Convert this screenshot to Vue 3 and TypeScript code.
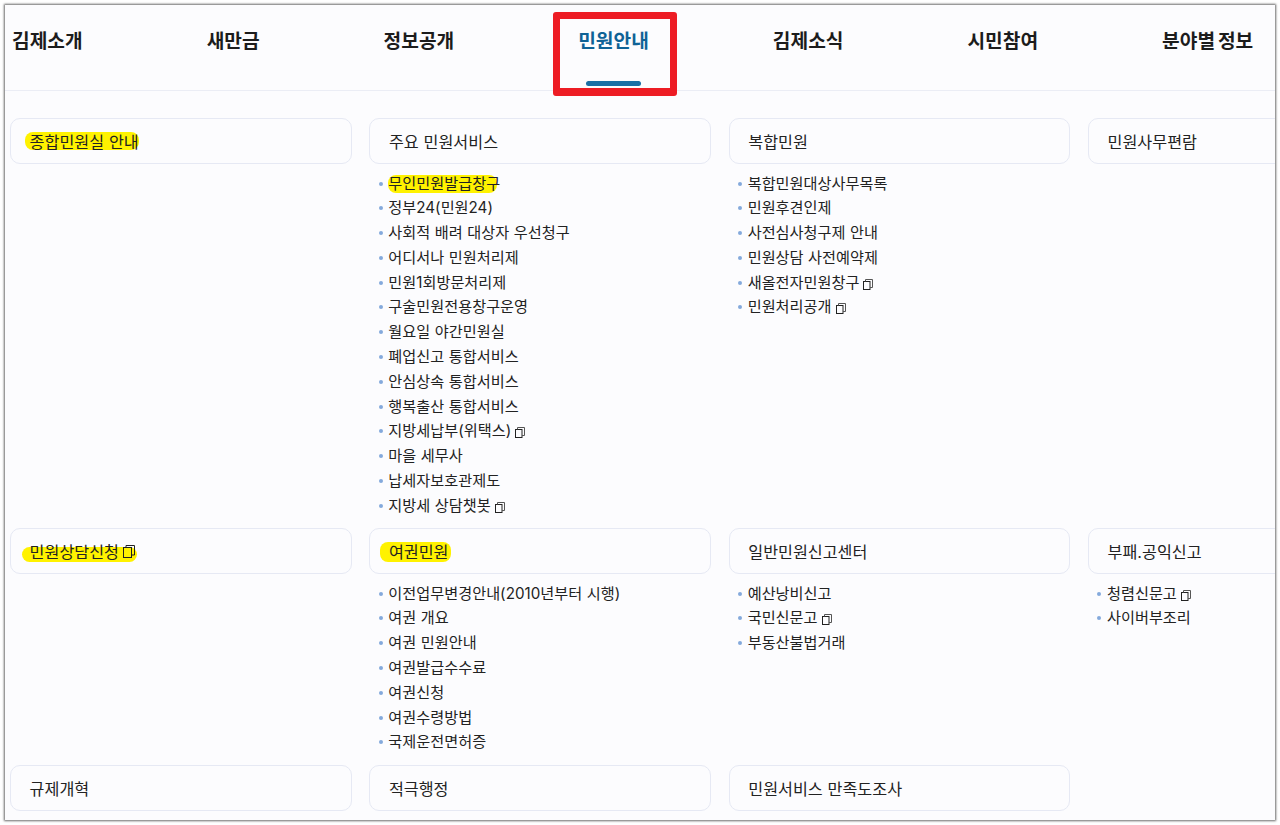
<script setup lang="ts">
interface Item { text: string; copy?: boolean; mark?: boolean }
interface Section { title: string; copy?: boolean; mark?: string; items: Item[] }

const nav: string[] = ['김제소개', '새만금', '정보공개', '민원안내', '김제소식', '시민참여', '분야별 정보']

const sections: Section[] = [
  { title: '종합민원실 안내', mark: 'mark-a', items: [] },
  {
    title: '주요 민원서비스',
    items: [
      { text: '무인민원발급창구', mark: true },
      { text: '정부24(민원24)' },
      { text: '사회적 배려 대상자 우선청구' },
      { text: '어디서나 민원처리제' },
      { text: '민원1회방문처리제' },
      { text: '구술민원전용창구운영' },
      { text: '월요일 야간민원실' },
      { text: '폐업신고 통합서비스' },
      { text: '안심상속 통합서비스' },
      { text: '행복출산 통합서비스' },
      { text: '지방세납부(위택스)', copy: true },
      { text: '마을 세무사' },
      { text: '납세자보호관제도' },
      { text: '지방세 상담챗봇', copy: true },
    ],
  },
  {
    title: '복합민원',
    items: [
      { text: '복합민원대상사무목록' },
      { text: '민원후견인제' },
      { text: '사전심사청구제 안내' },
      { text: '민원상담 사전예약제' },
      { text: '새올전자민원창구', copy: true },
      { text: '민원처리공개', copy: true },
    ],
  },
  { title: '민원사무편람', items: [] },
  { title: '민원상담신청', copy: true, mark: 'mark-b', items: [] },
  {
    title: '여권민원',
    mark: 'mark-c',
    items: [
      { text: '이전업무변경안내(2010년부터 시행)' },
      { text: '여권 개요' },
      { text: '여권 민원안내' },
      { text: '여권발급수수료' },
      { text: '여권신청' },
      { text: '여권수령방법' },
      { text: '국제운전면허증' },
    ],
  },
  {
    title: '일반민원신고센터',
    items: [
      { text: '예산낭비신고' },
      { text: '국민신문고', copy: true },
      { text: '부동산불법거래' },
    ],
  },
  {
    title: '부패.공익신고',
    items: [
      { text: '청렴신문고', copy: true },
      { text: '사이버부조리' },
    ],
  },
  { title: '규제개혁', items: [] },
  { title: '적극행정', items: [] },
  { title: '민원서비스 만족도조사', items: [] },
]
</script>

<template>
  <div class="frame">
    <nav class="topnav">
      <a v-for="name in nav" :key="name" class="nav-item" :class="{ active: name === '민원안내' }">
        {{ name }}
      </a>
    </nav>

    <div class="grid">
      <section v-for="s in sections" :key="s.title" class="col">
        <div class="card">
          <span class="label" :class="s.mark">
            {{ s.title }}
            <svg v-if="s.copy" class="copy" viewBox="0 0 12 13" width="12" height="13">
              <rect x="0.5" y="2.5" width="8" height="10" fill="none" stroke="currentColor" />
              <path d="M3 2.5V0.5H11.5V10H8.5" fill="none" stroke="currentColor" />
            </svg>
          </span>
        </div>
        <ul v-if="s.items.length" class="list">
          <li v-for="it in s.items" :key="it.text">
            <span class="label" :class="{ 'mark-d': it.mark }">{{ it.text }}</span>
            <svg v-if="it.copy" class="copy small" viewBox="0 0 10 11" width="10" height="11">
              <rect x="0.5" y="2.5" width="6.5" height="8" fill="none" stroke="currentColor" />
              <path d="M2.5 2.5V0.5H9.5V8.5H7" fill="none" stroke="#555" />
            </svg>
          </li>
        </ul>
      </section>
    </div>

    <div class="callout"></div>
  </div>
</template>

<style>
html, body { margin: 0; background: #fff; }
</style>

<style scoped>
.frame {
  position: relative;
  box-sizing: border-box;
  width: 1270px;
  height: 815px;
  margin: 5px;
  overflow: hidden;
  background: #fcfcfe;
  box-shadow: 0 0 2px 1px #6b6b6b;
  font-family: "Noto Sans CJK KR", "Noto Sans", sans-serif;
  color: #222;
}
.topnav {
  display: flex;
  gap: 124px;
  height: 86px;
  padding-left: 7px;
  box-sizing: border-box;
  border-bottom: 1px solid #ebedf5;
  white-space: nowrap;
  word-spacing: -1.5px;
}
.nav-item {
  position: relative;
  font-size: 19.2px;
  font-weight: 700;
  line-height: 70px;
  color: #1c1c1c;
}
.nav-item.active { color: #0f6296; }
.nav-item.active::after {
  content: "";
  position: absolute;
  left: 8px;
  right: 8px;
  bottom: 4px;
  height: 5px;
  border-radius: 3px;
  background: #1a6fa5;
}
.grid {
  display: grid;
  grid-template-columns: repeat(4, 341.5px);
  column-gap: 17.83px;
  padding: 27px 0 0 5px;
  font-family: Inter, "Noto Sans CJK KR", sans-serif;
}
.col { min-width: 0; margin-bottom: 10.5px; }
.card {
  box-sizing: border-box;
  height: 46px;
  padding: 0 18.6px;
  display: flex;
  align-items: center;
  border: 1px solid #e6e9f4;
  border-radius: 10px;
  font-size: 16.2px;
  word-spacing: 0.3px;
  white-space: nowrap;
}
.list {
  list-style: none;
  margin: 6.5px 0 0;
  padding: 0 0 0 10px;
  font-size: 15.2px;
  word-spacing: 0.3px;
}
.list li {
  position: relative;
  height: 24.8px;
  line-height: 26.6px;
  padding-left: 9px;
  white-space: nowrap;
}
.list li::before {
  content: "";
  position: absolute;
  left: -0.5px;
  top: 11px;
  width: 4px;
  height: 4px;
  border-radius: 50%;
  background: #84a9dc;
}
.label {
  position: relative;
  z-index: 0;
  display: inline-flex;
  align-items: center;
  gap: 4px;
}
.mark-a::before, .mark-b::before, .mark-c::before, .mark-d::before {
  content: "";
  position: absolute;
  z-index: -1;
  background: #fff200;
  border-radius: 8px;
}
.mark-a::before { left: -5px; right: 0; top: 3px; bottom: 3px; }
.mark-b::before { left: -8px; right: -2px; top: 8px; bottom: 1px; }
.mark-c::before { left: -9px; right: -2px; top: 3px; bottom: 1px; }
.mark-d::before { left: 0; right: 3px; top: 4px; bottom: 4px; }
.copy { flex: none; color: #222; }
.copy.small { margin-left: 4px; vertical-align: -2px; }
.callout {
  position: absolute;
  left: 548px;
  top: 7px;
  width: 124px;
  height: 84px;
  box-sizing: border-box;
  border: 7px solid #ed1c24;
  border-bottom-width: 8px;
  border-radius: 3px;
}
</style>
